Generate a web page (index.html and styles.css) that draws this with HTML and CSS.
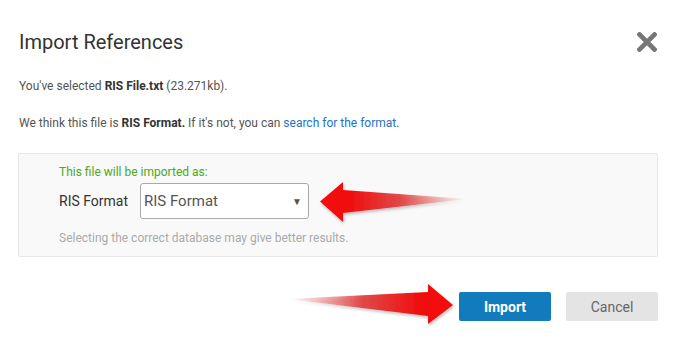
FILE: index.html
```html
<!DOCTYPE html>
<html>
<head>
<meta charset="utf-8">
<link rel="stylesheet" href="styles.css">
</head>
<body>
<div class="dialog">
  <div class="header">
    <h1 class="title">Import References</h1>
    <svg class="close" width="20" height="20" viewBox="0 0 20 20"><path d="M2.5 2.5 L17.5 17.5 M17.5 2.5 L2.5 17.5" stroke="#777" stroke-width="4.6" stroke-linecap="square"/></svg>
  </div>
  <p class="line line1">You've selected <b>RIS File.txt</b> (23.271kb).</p>
  <p class="line line2">We think this file is <b>RIS Format.</b> If it's not, you can <a class="link">search for the format</a>.</p>
  <div class="box">
    <div class="green">This file will be imported as:</div>
    <div class="row">
      <span class="label">RIS Format</span>
      <div class="select"><span>RIS Format</span><span class="caret">▼</span></div>
    </div>
    <div class="hint">Selecting the correct database may give better results.</div>
  </div>
  <div class="actions">
    <button class="btn primary">Import</button>
    <button class="btn secondary">Cancel</button>
  </div>
</div>
<svg class="annot" width="677" height="338" viewBox="0 0 677 338">
  <defs>
    <linearGradient id="g1" x1="320" y1="0" x2="467" y2="0" gradientUnits="userSpaceOnUse">
      <stop offset="0" stop-color="#f50a0a"/>
      <stop offset="0.2" stop-color="#f00d0d"/>
      <stop offset="0.55" stop-color="#e03a3a" stop-opacity="0.9"/>
      <stop offset="1" stop-color="#f07070" stop-opacity="0"/>
    </linearGradient>
    <linearGradient id="g2" x1="453" y1="0" x2="288" y2="0" gradientUnits="userSpaceOnUse">
      <stop offset="0" stop-color="#f50a0a"/>
      <stop offset="0.2" stop-color="#f00d0d"/>
      <stop offset="0.55" stop-color="#e03a3a" stop-opacity="0.9"/>
      <stop offset="1" stop-color="#f07070" stop-opacity="0"/>
    </linearGradient>
    <filter id="sh" x="-10%" y="-30%" width="120%" height="160%">
      <feDropShadow dx="1" dy="2" stdDeviation="1.5" flood-color="#000" flood-opacity="0.25"/>
    </filter>
  </defs>
  <path filter="url(#sh)" fill="url(#g1)" d="M320 201.5 L343 182 L343 190 L467 199 L343 213 L343 222 Z"/>
  <path filter="url(#sh)" fill="url(#g2)" d="M453 305 L428 284 L428 292 L288 299 L428 316 L428 324 Z"/>
</svg>
</body>
</html>
```
FILE: styles.css
```css
html, body {
  margin: 0;
  padding: 0;
  background: #fff;
}
body {
  font-family: Roboto, "Liberation Sans", sans-serif;
  width: 677px;
  height: 338px;
  overflow: hidden;
  position: relative;
}
.dialog {
  padding: 28px 19px 0 18px;
  display: flex;
  flex-direction: column;
}
.header {
  display: flex;
  justify-content: space-between;
  align-items: center;
  padding-right: 1px;
}
.title {
  margin: 0 0 0 1px;
  font-size: 20px;
  font-weight: 400;
  color: #333;
  line-height: 28px;
}
.close {
  display: block;
}
.line {
  margin: 0 0 0 1px;
  font-size: 12px;
  color: #555;
  line-height: 16px;
}
.line b {
  color: #333;
  font-weight: 700;
}
.line1 {
  margin-top: 22px;
}
.line2 {
  margin-top: 21px;
}
.link {
  color: #1a73c7;
  text-decoration: none;
}
.box {
  margin-top: 22px;
  background: #f9f9f9;
  border: 1px solid #e6e6e6;
  border-radius: 2px;
  padding: 10px 40px 10px 40px;
  display: flex;
  flex-direction: column;
}
.green {
  font-size: 12px;
  color: #4aa91c;
  line-height: 16px;
}
.row {
  display: flex;
  align-items: center;
  margin-top: 3px;
}
.label {
  font-size: 14px;
  color: #333;
  width: 81px;
}
.select {
  height: 34px;
  border: 1px solid #aaa;
  border-radius: 3px;
  background: #fff;
  display: flex;
  align-items: center;
  justify-content: space-between;
  padding: 0 6px 0 3px;
  box-sizing: content-box;
  width: 158px;
  font-size: 15px;
  color: #555;
}
.caret {
  font-size: 10px;
  color: #555;
}
.hint {
  margin-top: 11px;
  font-size: 12px;
  color: #aaa;
  line-height: 16px;
}
.actions {
  margin-top: 35px;
  display: flex;
  justify-content: flex-end;
  gap: 15px;
}
.btn {
  width: 92px;
  height: 29px;
  border: none;
  border-radius: 2px;
  font-family: Roboto, "Liberation Sans", sans-serif;
  font-size: 14px;
  padding: 0;
}
.primary {
  background: #117bbd;
  color: #fff;
  font-weight: 700;
}
.secondary {
  background: #e4e4e4;
  color: #666;
}
.annot {
  position: absolute;
  left: 0;
  top: 0;
  pointer-events: none;
}
```
